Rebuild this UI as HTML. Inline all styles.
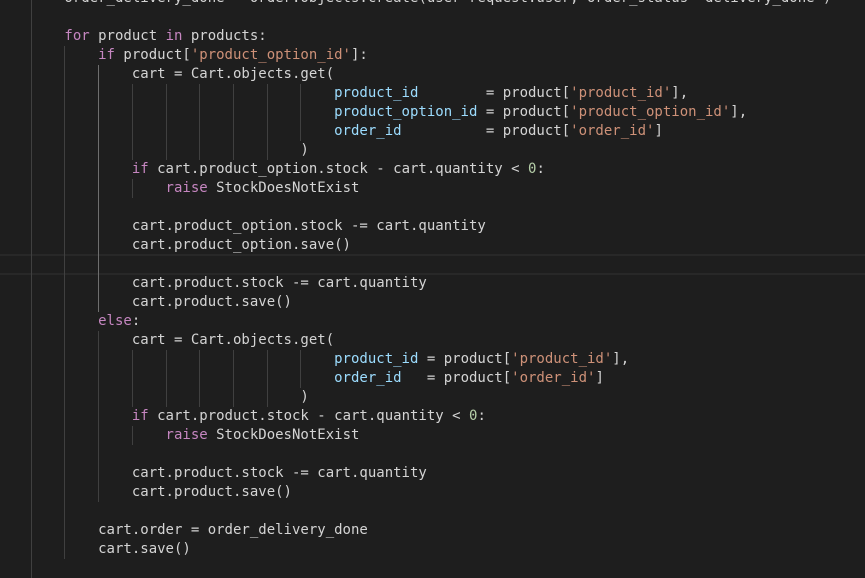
<!DOCTYPE html>
<html><head><meta charset="utf-8"><style>
html,body{margin:0;padding:0;background:#1e1e1e;width:865px;height:572px;overflow:hidden;}
.l{position:absolute;left:30.7px;height:19px;line-height:19px;font-family:"DejaVu Sans Mono","Liberation Mono",monospace;font-size:14px;color:#d4d4d4;white-space:pre;}
.g{position:absolute;width:1px;background:#404040;height:19px;}
.ga{background:#6e6e6e;}
.k{color:#c586c0}.s{color:#ce9178}.v{color:#9cdcfe}.n{color:#b5cea8}
.cur{position:absolute;left:0;width:865px;top:254px;height:17px;border-top:2px solid #282828;border-bottom:2px solid #282828;}
</style></head><body>
<div class="cur"></div>
<div id="c"></div>
<script>
const L=[
[1,'    order_delivery_done = Order.objects.create(user=request.user, order_status=\'delivery_done\')'],
[1,''],
[1,'    <span class="k">for</span> product <span class="k">in</span> products:'],
[2,'        <span class="k">if</span> product[<span class="s">\'product_option_id\'</span>]:'],
[3,'            cart = Cart.objects.get('],
[9,'                                    <span class="v">product_id</span>        = product[<span class="s">\'product_id\'</span>],'],
[9,'                                    <span class="v">product_option_id</span> = product[<span class="s">\'product_option_id\'</span>],'],
[9,'                                    <span class="v">order_id</span>          = product[<span class="s">\'order_id\'</span>]'],
[8,'                                )'],
[3,'            <span class="k">if</span> cart.product_option.stock - cart.quantity &lt; <span class="n">0</span>:'],
[4,'                <span class="k">raise</span> StockDoesNotExist'],
[3,''],
[3,'            cart.product_option.stock -= cart.quantity'],
[3,'            cart.product_option.save()'],
[3,''],
[3,'            cart.product.stock -= cart.quantity'],
[3,'            cart.product.save()'],
[2,'        <span class="k">else</span>:'],
[3,'            cart = Cart.objects.get('],
[9,'                                    <span class="v">product_id</span> = product[<span class="s">\'product_id\'</span>],'],
[9,'                                    <span class="v">order_id</span>   = product[<span class="s">\'order_id\'</span>]'],
[8,'                                )'],
[3,'            <span class="k">if</span> cart.product.stock - cart.quantity &lt; <span class="n">0</span>:'],
[4,'                <span class="k">raise</span> StockDoesNotExist'],
[3,''],
[3,'            cart.product.stock -= cart.quantity'],
[3,'            cart.product.save()'],
[2,''],
[2,'        cart.order = order_delivery_done'],
[2,'        cart.save()'],
[1,''],
];
let h='';
L.forEach((r,i)=>{
 const top=-11.5+19*i;
 for(let g=0;g<r[0];g++){
  const x=Math.round(30.7+g*4*8.43);
  const act=(g==2&&i>=4&&i<=16);
  h+=`<div class="g${act?' ga':''}" style="left:${x}px;top:${top}px"></div>`;
 }
 h+=`<div class="l" style="top:${top}px">${r[1]}</div>`;
});
document.getElementById('c').innerHTML=h;
</script>
</body></html>
